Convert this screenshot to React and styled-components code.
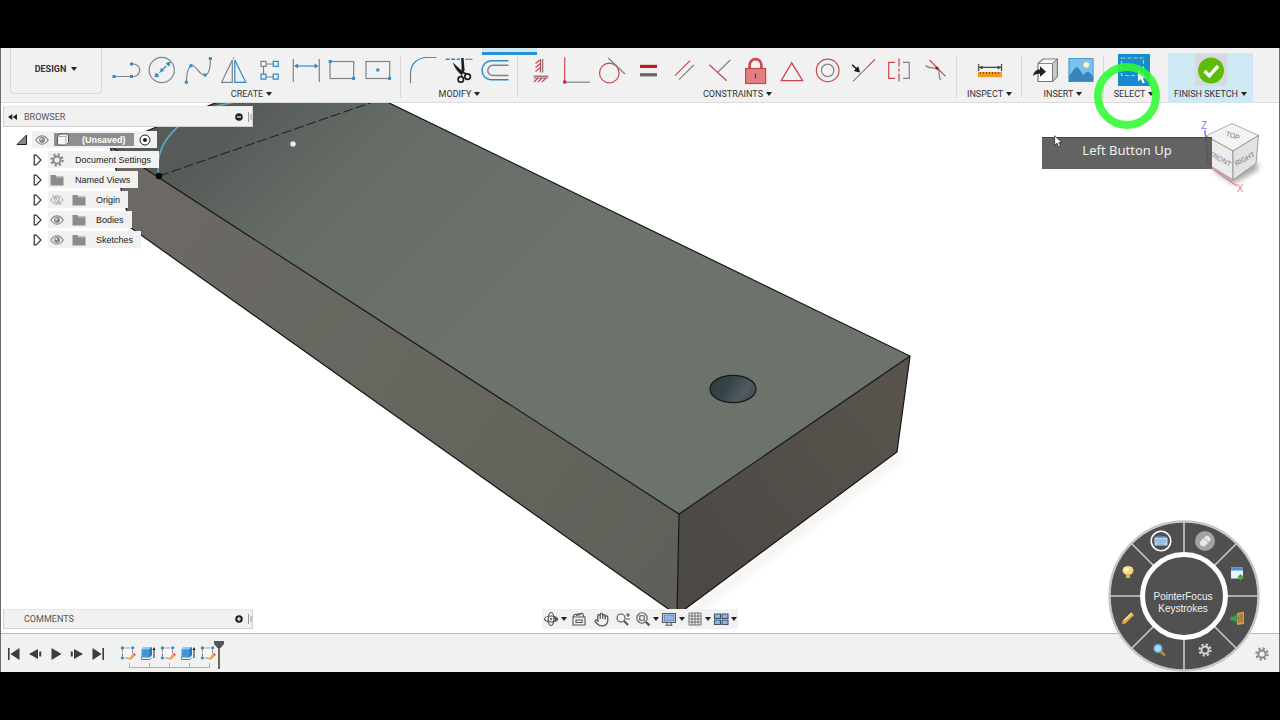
import React from "react";
import styled, { createGlobalStyle } from "styled-components";
import { Hand } from "lucide-react";

const GlobalStyle = createGlobalStyle`
  * { box-sizing: border-box; }
  body { margin: 0; background: #000; font-family: "Liberation Sans", Arial, sans-serif; }
  button { font: inherit; color: inherit; background: none; border: 0; padding: 0; cursor: default; }
  svg { display: block; flex: none; }
`;

const BLUE = "#2b8bcb";
const GREY = "#808386";
const RED = "#cc474b";

const Letterbox = styled.div`
  min-height: 100vh;
  padding: 48px 0;
  display: flex;
  background: #000;
`;

const AppWindow = styled.main`
  position: relative;
  flex: 1;
  min-width: 0;
  display: flex;
  flex-direction: column;
  overflow: hidden;
  background: #fff;
  border: solid #6b6b6b;
  border-width: 0 1px;
`;

/* ---------- toolbar ---------- */

const Toolbar = styled.header`
  display: flex;
  height: 55px;
  padding-left: 9px;
  background: #f1f1f1;
  border-bottom: 1px solid #dcdcdc;
`;

const WorkspaceButton = styled.button`
  display: flex;
  align-items: center;
  justify-content: center;
  gap: 5px;
  width: 92px;
  height: 46px;
  padding-bottom: 4px;
  border: 1px solid #d8d8d8;
  border-top: 0;
  border-radius: 0 0 4px 4px;
  font: 700 9px/16px Roboto, sans-serif;
  color: #333;
`;

const Caret = styled.span`
  width: 0;
  height: 0;
  border: 3px solid transparent;
  border-top: 4px solid #222;
  border-bottom: 0;
`;

const Group = styled.section`
  display: flex;
  flex-direction: column;
  align-items: center;
  width: ${(p) => p.$width}px;
  height: 55px;
  padding-top: 6px;
  flex: none;
`;

const FinishGroup = styled(Group)`
  height: 50px;
  margin: 5px 0 0 4px;
  padding-top: 1px;
  background: #cfe9f4;
`;

const Divider = styled.span`
  width: 1px;
  height: 42px;
  margin: 8px 0 0 -1px;
  background: #d8d8d8;
`;

const ToolRow = styled.div`
  display: flex;
  gap: 4px;
`;

const Tool = styled.button`
  position: relative;
  width: 32px;
  height: 32px;
  background: ${(p) => p.$bg || "none"};
`;

const ActiveStrip = styled.span`
  position: absolute;
  left: 2px;
  top: -6px;
  width: 55px;
  height: 7px;
  background: #cfe9f4;
  border-bottom: 3px solid #2593cf;
`;

const GroupLabel = styled.button`
  display: flex;
  align-items: center;
  gap: 3px;
  font: 9px/16px Roboto, sans-serif;
  color: #333;
  white-space: nowrap;
`;

const Dot = ({ x, y, c = BLUE }) => <rect x={x - 1.5} y={y - 1.5} width="3" height="3" fill={c} />;
const Ln = ({ d, c = GREY, w = 1.2, ...rest }) => <path d={d} stroke={c} strokeWidth={w} fill="none" {...rest} />;

const createTools = [
  ["Line", <><Ln d="M4 22.5H21.5M21.5 10h2a6.2 6.2 0 0 1 0 12.5h-2" /><Dot x={4} y={22.5} /><Dot x={21.5} y={22.5} /><Dot x={21.5} y={10} /></>],
  ["Circle", <><circle cx="15.7" cy="16" r="12.6" fill="none" stroke={GREY} strokeWidth="1.2" /><Ln c={BLUE} d="M9.5 22.5L23.5 8.8" strokeDasharray="4 1.5" /><path d="M24.6 7.8l-1.2 5-3.8-3.8zM8.4 23.6l1.2-5 3.8 3.8z" fill={BLUE} /><Dot x={16} y={16} /></>],
  ["Spline", <><Ln d="M4.3 28.3C4.5 20 6 13.5 9 11.7C14 9.5 17 22 23 21C28 20 28.5 12 28.3 4.5" /><Dot x={4.3} y={28.3} /><Dot x={9} y={11.7} /><Dot x={23} y={21} /><Dot x={28.3} y={4.5} /></>],
  ["Mirror", <><Ln d="M14.3 6V28.3H3.6z" /><Ln c={BLUE} d="M16.8 6V28.3H27.8z" /><Ln d="M15.5 3.5v1.5" /></>],
  ["Rectangular Pattern", <><Ln d="M12.2 10h7M9.5 13v7M12.2 23h7" /><rect x="7" y="7.4" width="5" height="5" fill="none" stroke={GREY} strokeWidth="1.2" /><path d="M19.2 7.4h5v5h-5zM7 20.2h5v5H7zM19.2 20.2h5v5h-5z" fill="none" stroke={BLUE} strokeWidth="1.2" /></>],
  ["Sketch Dimension", <><Ln d="M3.3 5v23M29.3 5v23" /><Ln c={BLUE} d="M6 12h21" /><path d="M4 12l4-2.6v5.2zM28.6 12l-4-2.6v5.2z" fill={BLUE} /></>],
  ["2-Point Rectangle", <><rect x="4" y="7.5" width="23.7" height="17" fill="none" stroke={GREY} strokeWidth="1.2" /><Dot x={4.2} y={7.5} /><Dot x={27.6} y={24.4} /></>],
  ["Center Rectangle", <><rect x="4" y="7.5" width="23.7" height="17" fill="none" stroke={GREY} strokeWidth="1.2" /><Dot x={15.8} y={16} /><Dot x={27.6} y={24.4} /></>],
];

const modifyTools = [
  ["Fillet", <><Ln d="M2.5 29.3V20M19 3.5h9.7" /><Ln c={BLUE} d="M2.5 20C2.5 10 9 3.5 19 3.5" /></>],
  ["Trim", <><Ln c={BLUE} w={1.4} d="M1.7 5.3H16" strokeDasharray="4 1.5" /><Ln d="M21 5.3h7.5" /><path d="M9 8.4l10.6 10.2-1.8 2.2C14 18.5 10 13 9 8.4zM17.2 4h2.4l1 12.4-2.8 4.4z" fill="#1d1d1d" /><Ln c="#1d1d1d" w={1.6} d="M18 20.5l-1 2.5M19 18.5l4 1.6" /><circle cx="16.8" cy="25.4" r="2.7" fill="none" stroke="#1d1d1d" strokeWidth="1.7" /><circle cx="23.6" cy="22.6" r="2.8" fill="none" stroke="#1d1d1d" strokeWidth="1.7" /></>],
  ["Offset", <><Ln c={BLUE} w={1.5} d="M28.5 6.8H11.5a9.5 9.5 0 0 0 0 19H28.5" /><Ln w={1.5} d="M28.5 11.2H13a5.2 5.2 0 0 0 0 10.4H28.5" /></>],
];

const constraintTools = [
  ["Horizontal/Vertical", <><Ln d="M18.6 5v13.5M9.7 22.3h14.5" w={1.4} /><Ln c={RED} d="M16.5 5v13.5M16.5 5.5l-5 4M16.5 9.5l-5 4M16.5 13.5l-5 4M9.7 24h14.5M14 24l-4 4M18 24l-4 4M22 24l-4 4" /></>],
  ["Coincident", <><Ln c={RED} d="M4.7 3.3V28" /><Ln d="M4.7 28.2H30" /><Dot c="#c01818" x={4.7} y={28} /></>],
  ["Tangent", <><circle cx="13.3" cy="19" r="9.8" fill="none" stroke={RED} strokeWidth="1.2" /><Ln d="M12.3 4L29 20" /></>],
  ["Equal", <><path d="M8 10.8h17V14H8z" fill="#bb1f23" /><path d="M8 19.2h17v3.2H8z" fill="#666" /></>],
  ["Parallel", <><Ln c={RED} d="M7 21.7L22 6.7" /><Ln d="M11 25.7L25.7 11" /></>],
  ["Perpendicular", <><Ln c={RED} d="M5.3 10.7L22.7 26.7" /><Ln d="M13.7 18.3L26.3 6" /></>],
  ["Fix/UnFix", <><path d="M9.6 14.5V11a5.9 5.9 0 0 1 11.8 0v3.5" fill="none" stroke="#c8474b" strokeWidth="2.6" /><rect x="5.6" y="14.5" width="20" height="15" fill="#e07e80" stroke="#c8474b" strokeWidth="1.2" /><path d="M15.5 19.5v5" stroke="#a81d20" strokeWidth="1.2" /></>],
  ["Midpoint", <Ln c={RED} w={1.3} d="M15.7 8.8L5.2 26.7H26.6z" />],
  ["Concentric", <><circle cx="15.7" cy="16.4" r="11.3" fill="none" stroke={RED} strokeWidth="1.2" /><circle cx="15.7" cy="16.4" r="6.2" fill="none" stroke={GREY} strokeWidth="1.2" /></>],
  ["Collinear", <><Ln d="M5 27.3L19 13.3" /><Ln c={RED} d="M19 13.3L27 5.3" /><Ln c="#111" w={1.5} d="M4 10.7L9 15.3" /><path d="M12 18.4l-6.2-1.5 4.4-4.6z" fill="#111" /></>],
  ["Symmetry", <><Ln c={RED} d="M11 8.3H4.7v16H11" /><Ln d="M19 8.3h6.3v16H19" /><Ln c={RED} d="M15 4.5v23" strokeDasharray="8 2 3 2" /></>],
  ["Curvature", <><Ln d="M5.5 11.5C9 15 13 13 17 14.4C21 16 17.5 23.5 21 26" /><Ln c={RED} d="M9.5 6L25.5 22.3" /><circle cx="17" cy="14.2" r="1.6" fill="#b81c20" /></>],
];

const inspectTools = [
  ["Measure", <><Ln c="#444" d="M4.7 10v7M27.5 10v7M5 13.4h22" /><path d="M5 13.4l3.6-2v4zM27.2 13.4l-3.6-2v4z" fill="#444" /><rect x="4" y="18" width="24" height="5.2" fill="#f39a1e" /><path d="M6.5 18v2M9.5 18v2M12.5 18v2M15.5 18v2M18.5 18v2M21.5 18v2M24.5 18v2" stroke="#86500c" /></>],
];

const insertTools = [
  ["Insert Derive", <><path d="M9 9.5L14 5h14.3v17.5L23.5 27.5H9z" fill="#fafafa" stroke="#777" strokeWidth="1.2" /><path d="M23.5 27.5v-18L28.3 5v17.5z" fill="#c9ccce" stroke="#777" /><path d="M9 9.5h14.5" stroke="#888" /><path d="M4 22c1-5 3.5-6.5 7-6.5v-3.2l6 5.4-6 5v-3c-3 0-5 .3-7 2.3z" fill="#222" /></>],
  ["Insert Image", <><rect x="3.5" y="4" width="25" height="24" fill="#7cc0ec" /><rect x="4" y="4.5" width="24" height="23" fill="none" stroke="#4f9bd0" /><path d="M4 22l6-8 2.5-1 6 8 3-3 2-.5L28 22v5.5H4z" fill="#3584bd" /><circle cx="21.3" cy="10.7" r="2.8" fill="#fff6c4" /></>],
];

const ToolIcon = ({ children }) => <svg width="32" height="32" viewBox="0 0 32 32" aria-hidden="true">{children}</svg>;

function ToolGroup({ label, width, tools }) {
  return (
    <>
      <Group $width={width}>
        <ToolRow>
          {tools.map(([name, art]) => (
            <Tool key={name} aria-label={name}>
              {name === "Offset" && <ActiveStrip />}
              <ToolIcon>{art}</ToolIcon>
            </Tool>
          ))}
        </ToolRow>
        <GroupLabel>{label}<Caret /></GroupLabel>
      </Group>
      <Divider />
    </>
  );
}

/* ---------- viewport ---------- */

const Viewport = styled.section`
  position: relative;
  flex: 1;
  min-height: 530px;
  display: flex;
  flex-direction: column;
  justify-content: space-between;
  padding: 3px 2px 4px;
`;

const Scene = styled.svg`
  position: absolute;
  inset: 0;
  width: 100%;
  height: 100%;
`;

const Browser = styled.aside`
  position: relative;
  width: 250px;
`;

const PanelBar = styled.div`
  display: flex;
  align-items: center;
  justify-content: space-between;
  width: 250px;
  height: ${(p) => p.$height}px;
  padding: 0 0 0 4px;
  background: #f1f1f1;
  border: 1px solid #cfcfcf;
  border-top-color: #e6e6e6;
  font: 9px/16px Roboto, sans-serif;
  color: #555;
`;

const PanelTitle = styled.span`
  display: flex;
  align-items: center;
  gap: 7px;
  padding-left: ${(p) => (p.$indent ? 16 : 0)}px;
`;

const PanelActions = styled.span`
  display: flex;
  align-items: center;
  gap: 5px;
`;

const Tree = styled.ul`
  list-style: none;
  margin: 0;
  padding: 3px 0 0;
`;

const TreeRow = styled.li`
  display: flex;
  align-items: center;
  gap: ${(p) => (p.$root ? 4 : 6)}px;
  height: 20px;
  padding: 0 0 1px ${(p) => (p.$root ? 13 : 30)}px;
`;

const RowBody = styled.div`
  display: flex;
  align-items: center;
  height: 17px;
  gap: 8px;
  padding: 0 8px 0 2px;
  background: #f1f1f1;
  font-size: 9px;
  line-height: 16px;
  color: #222;
  white-space: nowrap;
`;

const RootBody = styled(RowBody)`
  gap: 5px;
  padding: 0 6px 0 3px;
`;

const RowName = styled.span`
  padding-left: ${(p) => (p.$wide ? 2 : 3)}px;
`;

const Selected = styled.span`
  display: flex;
  align-items: center;
  gap: 12px;
  height: 13px;
  padding: 0 8px 0 2px;
  background: #8f8f8f;
  color: #fff;
  font-weight: 700;
`;

const BottomRow = styled.div`
  position: relative;
  display: grid;
  grid-template-columns: 1fr auto 1fr;
`;

const NavBar = styled.nav`
  display: flex;
  height: 20px;
  background: #f1f1f1;
`;

const NavButton = styled.button`
  display: flex;
  align-items: center;
  justify-content: center;
  gap: 2px;
  width: ${(p) => (p.$menu ? 26 : 22)}px;
`;

const Gear = ({ size = 14, color = "#8a8a8a" }) => (
  <svg width={size} height={size} viewBox="0 0 14 14" fill="none" stroke={color} aria-hidden="true">
    <circle cx="7" cy="7" r="3.6" strokeWidth="2" />
    <circle cx="7" cy="7" r="5.6" strokeWidth="2.2" strokeDasharray="2.2 2.198" />
  </svg>
);

const Eye = ({ off }) => (
  <svg width="14" height="12" viewBox="0 0 14 12" fill="none" stroke={off ? "#a2a2a2" : "#8c8c8c"} aria-hidden="true">
    <path d="M.8 6C3 2.6 5 1.8 7 1.8S11 2.6 13.2 6C11 9.4 9 10.2 7 10.2S3 9.4.8 6z" strokeWidth={off ? 1 : 1.3} />
    <circle cx="7" cy="6" r="2.6" fill={off ? "none" : "#8c8c8c"} />
    {off ? <path d="M2.5 1l9 10" /> : <circle cx="6.3" cy="5.2" r=".9" fill="#f1f1f1" stroke="none" />}
  </svg>
);

const Folder = () => (
  <svg width="14" height="12" viewBox="0 0 14 12" aria-hidden="true">
    <path d="M.5 1h5l1 1.6h7V11.5H.5z" fill="#8c8c8c" /><path d="M6 3.2h7.5" stroke="#c4c4c4" strokeWidth=".8" />
  </svg>
);

const Expander = () => (
  <svg width="9" height="12" viewBox="0 0 9 12" aria-hidden="true"><path d="M1.2 1.2h2L8 6l-4.8 4.8h-2z" fill="#fff" stroke="#333" strokeWidth="1.2" /></svg>
);

const PlusMinus = ({ plus }) => (
  <svg width="8" height="8" viewBox="0 0 8 8" aria-hidden="true"><circle cx="4" cy="4" r="3.8" fill="#222" /><path d={plus ? "M2 4h4M4 2v4" : "M2 4h4"} stroke="#fff" strokeWidth="1.2" /></svg>
);

const Grip = () => (
  <svg width="4" height="10" viewBox="0 0 4 10" aria-hidden="true"><path d="M.5 0v10M3 2v6" stroke="#999" /></svg>
);

const treeRows = [
  { name: "Document Settings", icons: [<Gear key="g" />] },
  { name: "Named Views", icons: [<Folder key="f" />] },
  { name: "Origin", icons: [<Eye key="e" off />, <Folder key="f" />] },
  { name: "Bodies", icons: [<Eye key="e" />, <Folder key="f" />] },
  { name: "Sketches", icons: [<Eye key="e" />, <Folder key="f" />] },
];

const navItems = [
  ["Orbit", true, <><ellipse cx="8" cy="8" rx="6.5" ry="3" /><ellipse cx="8" cy="8" rx="2.8" ry="6.5" /><path d="M11 6l3.500 2-2.500 2.500" fill="#555" /><circle cx="8" cy="8" r="1.200" fill={BLUE} stroke="none" /></>],
  ["Look At", false, <path d="M2 6h12v8H2zM5 9h6v2.500H5zM2 6l1.500-2.500 8-1.200L13 6M5 4.500L10 3.500" />],
  ["Pan", false, null],
  ["Zoom", false, <><circle cx="6" cy="7" r="4" /><path d="M9 10l4 4" strokeWidth="2" /><path d="M11 4h4M13 2v4M11 8h4" /></>],
  ["Fit", true, <><circle cx="7" cy="7" r="5.2" /><path d="M4.800 4.800h4.400v4.400H4.800z" /><path d="M11 11l3.400 3.400" strokeWidth="2.2" /></>],
  ["Display Settings", true, <><path d="M1.500 2.500h13v9h-13z" /><path d="M3.200 4h9.600v6H3.200z" fill="#8eb6e8" stroke="#5a86c0" /><path d="M6 12v2M10 12v2M4.500 14.300h7" /></>],
  ["Grid and Snaps", true, <path d="M2 2h12v12H2zM5 2v12M8 2v12M11 2v12M2 5h12M2 8h12M2 11h12" stroke="#666" strokeWidth=".9" />],
  ["Viewports", true, <path d="M1.500 3h6v4.500h-6zM9 3h6v4.500H9zM1.500 9h6v4.500h-6zM9 9h6v4.500H9z" fill="#8eb2e2" stroke="#3f536e" />],
];

function Model() {
  return (
    <Scene viewBox="1 103 1278 530" preserveAspectRatio="xMinYMin slice" aria-label="Model">
      <defs>
        <linearGradient id="top" gradientUnits="userSpaceOnUse" x1="260" y1="90" x2="660" y2="480">
          <stop offset="0" stopColor="#565b57" /><stop offset=".22" stopColor="#666d67" /><stop offset=".6" stopColor="#6b736c" /><stop offset="1" stopColor="#6b736b" />
        </linearGradient>
        <linearGradient id="side" gradientUnits="userSpaceOnUse" x1="150" y1="200" x2="680" y2="560">
          <stop offset="0" stopColor="#6c6964" /><stop offset=".5" stopColor="#67665f" /><stop offset="1" stopColor="#5f6059" />
        </linearGradient>
        <linearGradient id="end" gradientUnits="userSpaceOnUse" x1="680" y1="560" x2="900" y2="390">
          <stop offset="0" stopColor="#4c4843" /><stop offset="1" stopColor="#58534d" />
        </linearGradient>
        <linearGradient id="hole" x1="0" y1="0.3" x2="1" y2="0.7"><stop offset="0" stopColor="#333c41" /><stop offset=".35" stopColor="#37424a" /><stop offset=".75" stopColor="#505b61" /><stop offset="1" stopColor="#414b50" /></linearGradient>
        <filter id="soft" x="-10%" y="-10%" width="120%" height="120%"><feGaussianBlur stdDeviation="4" /></filter>
      </defs>
      <path d="M684 618L900 456" stroke="#f0edeb" strokeWidth="6" filter="url(#soft)" />
      <path d="M110 146L225 99L381 99L910 356L679 514z" fill="url(#top)" />
      <path d="M110 146L679 514L677 615L620 575L131 228z" fill="url(#side)" />
      <path d="M679 514L910 356L897 452L677 615z" fill="url(#end)" />
      <path d="M225 99L110 146L131 228L620 575L677 615L897 452L910 356L381 99M110 146L679 514L910 356M679 514L677 615" fill="none" stroke="#161616" strokeWidth="1.2" />
      <path d="M159 176C153 145 178 112 235 102" fill="none" stroke="#59a9cf" strokeWidth="1.6" />
      <path d="M159 176L373 102" stroke="#222" strokeWidth="1.1" strokeDasharray="10 3" />
      <circle cx="159" cy="176" r="3.2" fill="#050505" />
      <circle cx="293" cy="144" r="2.8" fill="#f2f2f2" stroke="#999" strokeWidth=".6" />
      <ellipse cx="733" cy="389" rx="23" ry="13.6" fill="url(#hole)" stroke="#15191b" strokeWidth="1.2" />
    </Scene>
  );
}

/* ---------- timeline ---------- */

const Timeline = styled.footer`
  display: flex;
  align-items: center;
  height: 39px;
  padding: 1px 10px 0 2px;
  background: #f1f1f1;
  border-top: 1px solid #b9b9b9;
`;

const PlayButton = styled.button`
  display: flex;
  justify-content: center;
  width: 21px;
`;

const Features = styled.div`
  position: relative;
  display: flex;
  height: 34px;
  margin: 0 auto 0 10px;
  padding-top: 8px;
`;

const Feature = styled.button`
  display: flex;
  justify-content: center;
  width: 20px;
  height: 17px;
`;

const Track = styled.svg`
  position: absolute;
  left: 0;
  top: 4px;
`;

const playIcons = [
  ["Go to start", "M2 2h1.6v12H2zM13.5 2v12L4.5 8z"],
  ["Step back", "M11 3v10L2 8zM12.2 5.5h2v5h-2z"],
  ["Play", "M3.5 2v12L13.5 8z"],
  ["Step forward", "M5 3v10l9-5zM1.8 5.5h2v5h-2z"],
  ["Go to end", "M12.4 2H14v12h-1.6zM2.5 2v12l9-6z"],
];

const SketchFeature = () => (
  <svg width="16" height="16" viewBox="0 0 16 16" aria-hidden="true">
    <path d="M2.5 3h10v10h-10z" fill="#fafafa" stroke="#888" strokeDasharray="3 1" />
    <path d="M1 1.6h2.6v2.6H1zM11.5 1.6h2.6v2.6h-2.6zM1 11.6h2.6v2.6H1z" fill={BLUE} />
    <path d="M8 14l5-5 2 2-5 4z" fill="#f0a43a" /><path d="M13 9l1.2-1 1.6 1.8-.8 1.2z" fill="#d94d3a" />
  </svg>
);

const ExtrudeFeature = () => (
  <svg width="16" height="16" viewBox="0 0 16 16" aria-hidden="true">
    <path d="M1.5 12v2.5h8.5l2-2" fill="none" stroke="#777" />
    <path d="M1.5 4.5L4 2h8v8l-2.5 2.5h-8z" fill="#3e98d8" /><path d="M1.5 4.5L4 2h8L9.5 4.5z" fill="#86c5ef" /><path d="M9.5 4.5L12 2v8l-2.5 2.5z" fill="#2579b5" />
    <path d="M14 13V4" stroke="#222" /><path d="M14 2l1.6 3h-3.2z" fill="#222" />
  </svg>
);

/* ---------- overlays ---------- */

const ViewCube = styled.svg`
  position: absolute;
  right: 15px;
  top: 67px;
`;

const ClickRing = styled.span`
  position: absolute;
  right: 119px;
  top: 15px;
  width: 66px;
  height: 66px;
  border: 8px solid rgba(48, 250, 48, 0.88);
  border-radius: 50%;
  pointer-events: none;
`;

const KeyBanner = styled.div`
  position: absolute;
  right: 67px;
  top: 89px;
  width: 170px;
  height: 32px;
  border-top: 1px solid #444;
  background: rgba(82, 82, 82, 0.9);
  color: #f0f0f0;
  font: 13px/24px "Noto Sans", sans-serif;
  text-align: center;
`;

const Pointer = styled.svg`
  position: absolute;
  left: 12px;
  top: -3px;
`;

const Wheel = styled.div`
  position: absolute;
  right: 19px;
  bottom: 0;
  width: 152px;
  height: 152px;
`;

const WheelButton = styled.button`
  position: absolute;
  left: ${(p) => p.$x}px;
  top: ${(p) => p.$y}px;
  width: 22px;
  height: 22px;
`;

const WheelTitle = styled.p`
  position: absolute;
  left: 36px;
  top: 71px;
  width: 78px;
  margin: 0;
  font-size: 10px;
  line-height: 12px;
  color: #f2f2f2;
  text-align: center;
`;

const wheelItems = [
  ["Keystrokes", 42, 10, <><circle cx="11" cy="11" r="9.8" fill="none" stroke="#fff" strokeWidth="1.6" /><path d="M5 7.5l4-1.5 7 1" stroke="#5b91c5" fill="none" /><rect x="4.5" y="7.5" width="13" height="8" rx="1" fill="#b9d7f2" /><path d="M6 10h10M6 12h10M7.5 14h7" stroke="#5f8fc0" strokeDasharray="1.5 .6" /></>],
  ["Mouse Clicks", 86, 10, <><circle cx="11" cy="11" r="10" fill="#a2a2a2" /><g transform="rotate(45 11 11)"><rect x="8" y="5" width="6.5" height="12" rx="3.2" fill="#e9e9e9" /><path d="M8 9.5h6.5" stroke="#999" strokeWidth=".8" /></g></>],
  ["New Window", 118, 42, <><rect x="5" y="5.5" width="12" height="11" fill="#e9f3fb" /><path d="M5 5.5h12v3H5z" fill="#4c8ed6" /><path d="M14.5 12l3.5 3-3.5 3.5-3-3.5z" fill="#49a942" /></>],
  ["Exit", 118, 87, <><path d="M11 6l7-1.5V17l-7 1z" fill="#d89a4b" /><path d="M12 7.5l5-1V15l-5 1z" fill="#b97c35" /><path d="M4.5 9.500h4V7l4.500 4.500L8.500 16v-2.500h-4z" fill="#37a34b" /></>],
  ["Settings", 86, 119, <g transform="translate(4 4)" fill="none" stroke="#d8d8d8"><circle cx="7" cy="7" r="3.6" strokeWidth="2" /><circle cx="7" cy="7" r="5.6" strokeWidth="2" strokeDasharray="2.2 2.198" /></g>],
  ["Magnifier", 40, 119, <><path d="M12.500 12.500l4.500 4" stroke="#c7863d" strokeWidth="2.400" /><circle cx="10" cy="9.500" r="4" fill="#a9d8fa" stroke="#5f9ed2" strokeWidth="1.400" /></>],
  ["Pen", 9, 86, <><path d="M5.500 15l8.500-8.500 3 2.500-8.500 8.500-3.500.5z" fill="#f0a838" /><path d="M7 14.500l8-7.500" stroke="#ffe29a" strokeWidth="1.300" /></>],
  ["Highlight", 9, 41, <><ellipse cx="11" cy="9.500" rx="5.500" ry="4.600" fill="#ffd77a" /><ellipse cx="9.500" cy="8.500" rx="2.500" ry="2" fill="#fff5cf" /><path d="M9 13h4v4H9z" fill="#d9b36a" /></>],
];

const spokes = Array.from({ length: 8 }, (_, i) => {
  const a = (i * Math.PI) / 4;
  return `M${76 + 42 * Math.cos(a)} ${76 + 42 * Math.sin(a)}L${76 + 75 * Math.cos(a)} ${76 + 75 * Math.sin(a)}`;
}).join("");

export default function App() {
  return (
    <Letterbox>
      <GlobalStyle />
      <AppWindow>
        <Toolbar>
          <WorkspaceButton>DESIGN<Caret /></WorkspaceButton>
          <ToolGroup label="CREATE" width={299} tools={createTools} />
          <ToolGroup label="MODIFY" width={117} tools={modifyTools} />
          <ToolGroup label="CONSTRAINTS" width={439} tools={constraintTools} />
          <ToolGroup label="INSPECT" width={65} tools={inspectTools} />
          <ToolGroup label="INSERT" width={82} tools={insertTools} />
          <Group $width={60}>
            <Tool aria-label="Select" $bg="#168bd0">
              <ToolIcon>
                <path d="M3.5 4h22v17.500h-22z" fill="none" stroke="#a8dc8c" strokeWidth="1.200" strokeDasharray="4 2" />
                <path d="M20 15v12.500l2.700-2.400 2.200 4.500 2-1-2.200-4.300 3.800-.3z" fill="#fff" />
              </ToolIcon>
            </Tool>
            <GroupLabel>SELECT<Caret /></GroupLabel>
          </Group>
          <FinishGroup $width={85}>
            <Tool aria-label="Finish" $bg="#d6dadc">
              <ToolIcon><circle cx="16" cy="16.500" r="13" fill="#5dbb0a" /><path d="M9.500 17l4.800 4.800L23 12" fill="none" stroke="#fff" strokeWidth="3.400" /></ToolIcon>
            </Tool>
            <GroupLabel>FINISH SKETCH<Caret /></GroupLabel>
          </FinishGroup>
        </Toolbar>

        <Viewport>
          <Model />
          <Browser>
            <PanelBar $height={21}>
              <PanelTitle>
                <svg width="9" height="6" viewBox="0 0 9 6" aria-hidden="true"><path d="M4.300 0v6L0 3zM9 0v6L4.700 3z" fill="#222" /></svg>
                BROWSER
              </PanelTitle>
              <PanelActions><PlusMinus /><Grip /></PanelActions>
            </PanelBar>
            <Tree>
              <TreeRow $root>
                <svg width="12" height="12" viewBox="0 0 12 12" aria-hidden="true"><path d="M10.500 1v9.500H1z" fill="#888" stroke="#222" /></svg>
                <RootBody>
                  <Eye />
                  <Selected>
                    <svg width="14" height="13" viewBox="0 0 14 13" aria-hidden="true"><path d="M1.500 3.500L4 1h8.500v8.500L10 12H1.500z" fill="#f6f6f6" stroke="#555" /><path d="M1.500 3.500H10V12M10 3.500L12.500 1" fill="none" stroke="#aaa" /></svg>
                    (Unsaved)
                  </Selected>
                  <svg width="12" height="12" viewBox="0 0 12 12" aria-hidden="true"><circle cx="6" cy="6" r="5" fill="#fff" stroke="#222" /><circle cx="6" cy="6" r="2" fill="#222" /></svg>
                </RootBody>
              </TreeRow>
              {treeRows.map((row) => (
                <TreeRow key={row.name}>
                  <Expander />
                  <RowBody>
                    {row.icons}
                    <RowName $wide={row.icons.length > 1}>{row.name}</RowName>
                  </RowBody>
                </TreeRow>
              ))}
            </Tree>
          </Browser>

          <BottomRow>
            <PanelBar $height={20}>
              <PanelTitle $indent>COMMENTS</PanelTitle>
              <PanelActions><PlusMinus plus /><Grip /></PanelActions>
            </PanelBar>
            <NavBar>
              {navItems.map(([name, menu, art]) => (
                <NavButton key={name} $menu={menu} aria-label={name}>
                  {art ? (
                    <svg width="16" height="16" viewBox="0 0 16 16" fill="none" stroke="#555" strokeWidth="1.100">{art}</svg>
                  ) : (
                    <Hand size={15} color="#555" strokeWidth={2} />
                  )}
                  {menu && <Caret />}
                </NavButton>
              ))}
            </NavBar>
          </BottomRow>
        </Viewport>

        <Timeline>
          {playIcons.map(([name, d]) => (
            <PlayButton key={name} aria-label={name}>
              <svg width="16" height="16" viewBox="0 0 16 16"><path d={d} fill="#3c3c3c" /></svg>
            </PlayButton>
          ))}
          <Features>
            <Track width="108" height="30" viewBox="0 0 108 30" aria-hidden="true">
              <path d="M11.500 22v4.500h80V22M31.500 22v4.500M51.500 22v4.500M71.500 22v4.500" fill="none" stroke="#b0b0b0" />
            </Track>
            {["Sketch1", "Extrude1", "Sketch2", "Extrude2", "Sketch3"].map((name) => (
              <Feature key={name} aria-label={name}>
                {name.startsWith("Sketch") ? <SketchFeature /> : <ExtrudeFeature />}
              </Feature>
            ))}
            <Track width="108" height="30" viewBox="0 0 108 30" aria-hidden="true">
              <path d="M96 0h10v3l-3.500 4h-3L96 3z" fill="#555" /><path d="M101 5v23" stroke="#444" strokeWidth="1.600" />
            </Track>
          </Features>
          <button aria-label="Timeline settings"><Gear /></button>
        </Timeline>

        <ViewCube width="68" height="80" viewBox="1196 115 68 80" aria-label="View cube">
          <defs><filter id="cubeShadow" x="-30%" y="-30%" width="160%" height="160%"><feGaussianBlur stdDeviation="2.500" /></filter></defs>
          <path d="M1212 170L1233 184L1258 170L1258 162z" fill="#aaa" filter="url(#cubeShadow)" />
          <path d="M1205 130L1208 165" stroke="#7b76dc" strokeWidth="1.500" />
          <path d="M1210 167L1237 186" stroke="#e57f82" strokeWidth="1.500" />
          <path d="M1206 136L1232 123.500L1258.500 135.500L1233 151z" fill="#f3f3f3" stroke="#999" strokeWidth=".8" />
          <path d="M1206 136L1233 151V180L1209 165z" fill="#ececec" stroke="#888" strokeWidth=".8" />
          <path d="M1233 151L1258.500 135.500L1256 163.500L1233 180z" fill="#e2e2e2" stroke="#888" strokeWidth=".8" />
          <g fontFamily="Liberation Sans, sans-serif" fontSize="7" fill="#777" textAnchor="middle">
            <text transform="translate(1232 138) rotate(18)">TOP</text>
            <text transform="translate(1219 161) rotate(29)">FRONT</text>
            <text transform="translate(1246 161) rotate(-28)">RIGHT</text>
          </g>
          <g fontFamily="Liberation Sans, sans-serif" fontSize="10" textAnchor="middle">
            <text x="1204" y="129" fill="#8080f0">Z</text>
            <text x="1240" y="192" fill="#f07c7c">X</text>
          </g>
        </ViewCube>

        <KeyBanner>
          Left Button Up
          <Pointer width="10" height="13" viewBox="0 0 10 13" aria-hidden="true">
            <path d="M.7.7v9.500l2.300-2 1.700 3.800 1.800-.8L4.800 7.600l3-.2z" fill="#fff" stroke="#222" strokeWidth=".7" />
          </Pointer>
        </KeyBanner>
        <ClickRing />

        <Wheel>
          <svg width="152" height="152" viewBox="0 0 152 152" aria-hidden="true">
            <circle cx="76" cy="76" r="74.500" fill="rgba(70,70,70,.95)" stroke="#c6c6c6" strokeWidth="2.400" />
            <path d={spokes} stroke="#c9c9c9" strokeWidth="1.600" />
            <circle cx="76" cy="76" r="41.500" fill="#505050" stroke="#fff" strokeWidth="5" />
          </svg>
          {wheelItems.map(([name, x, y, art]) => (
            <WheelButton key={name} $x={x} $y={y} aria-label={name}>
              <svg width="22" height="22" viewBox="0 0 22 22">{art}</svg>
            </WheelButton>
          ))}
          <WheelTitle>PointerFocus<br />Keystrokes</WheelTitle>
        </Wheel>
      </AppWindow>
    </Letterbox>
  );
}
